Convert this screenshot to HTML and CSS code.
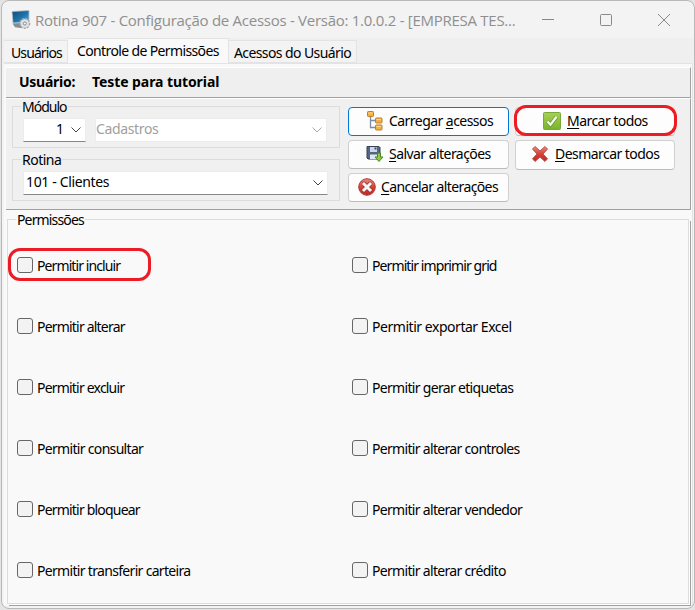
FILE: index.html
```html
<!DOCTYPE html>
<html lang="pt-BR">
<head>
<meta charset="utf-8">
<title>Rotina 907 - Configuração de Acessos</title>
<link rel="stylesheet" href="styles.css">
</head>
<body>
<div class="window">
  <header class="titlebar">
    <svg class="app-icon" width="20" height="20" viewBox="0 0 20 20">
      <defs><linearGradient id="scr" x1="0" y1="0" x2="1" y2="1"><stop offset="0" stop-color="#164873"/><stop offset=".55" stop-color="#1d74ae"/><stop offset="1" stop-color="#58b3dd"/></linearGradient></defs>
      <path d="M1 1.500 18 .5V12L2 13z" fill="url(#scr)" stroke="#b5c0c8" stroke-width=".8"/>
      <path d="M1.500 13.500 10 13v5l-6-.7z" fill="#858c92"/>
      <circle cx="13.800" cy="13.500" r="4.800" fill="#d7d9da" stroke="#a5a9ab" stroke-width="1.500" stroke-dasharray="2 1.200"/>
      <circle cx="13.800" cy="13.500" r="3.800" fill="#dfe1e2"/>
      <circle cx="13.800" cy="13.500" r="1.500" fill="#f7f7f7" stroke="#85898c"/>
    </svg>
    <h1 class="title">Rotina 907 - Configuração de Acessos - Versão: 1.0.0.2 - [EMPRESA TES...</h1>
    <div class="controls">
      <svg width="12" height="12" viewBox="0 0 12 12"><path d="M0 5.500h12"/></svg>
      <svg width="12" height="12" viewBox="0 0 12 12"><rect x=".5" y=".5" width="11" height="11" rx="1"/></svg>
      <svg width="12" height="12" viewBox="0 0 12 12"><path d="M0 0l12 12M12 0L0 12"/></svg>
    </div>
  </header>
  <nav class="tabs">
    <span class="tab tab-users">Usuários</span>
    <span class="tab tab-control active">Controle de Permissões</span>
    <span class="tab tab-access">Acessos do Usuário</span>
  </nav>
  <main class="page">
    <div class="userbar"><b class="user-label">Usuário:</b><b class="user-name">Teste para tutorial</b></div>
    <section class="toolbar">
      <div class="filters">
        <div class="group">
          <span class="legend"><span class="legend-module">Módulo</span></span>
          <div class="fields">
            <div class="combo number"><span>1</span><svg width="10" height="6" viewBox="0 0 10 6"><path d="M.5.5 5 5 9.500.5"/></svg></div>
            <div class="combo disabled"><span>Cadastros</span><svg width="10" height="6" viewBox="0 0 10 6"><path d="M.5.5 5 5 9.500.5"/></svg></div>
          </div>
        </div>
        <div class="group">
          <span class="legend"><span class="legend-routine">Rotina</span></span>
          <div class="fields">
            <div class="combo routine"><span>101 - Clientes</span><svg width="10" height="6" viewBox="0 0 10 6"><path d="M.5.5 5 5 9.500.5"/></svg></div>
          </div>
        </div>
      </div>
      <div class="actions">
        <button class="btn focused">
          <svg width="18" height="20" viewBox="0 0 18 20"><path d="M4.500 5v11.500H9M4.500 9.500H9" fill="none" stroke="#7d8ca3" stroke-width="1.300"/><g fill="#f3ae45" stroke="#bd7e2c"><rect x="1.500" y=".5" width="6" height="5" rx=".8"/><rect x="9.500" y="7" width="6.500" height="5" rx=".8"/><rect x="9.500" y="14" width="6.500" height="5" rx=".8"/></g><path d="M2.500 2h4M10.500 8.500H15M10.500 15.500H15" stroke="#ffdc8d"/></svg>
          <span class="t-load">Carregar <u>a</u>cessos</span>
        </button>
        <button class="btn save">
          <svg width="18" height="18" viewBox="0 0 18 18"><path d="M1 1.500h12l1 1V14H2l-1-1z" fill="#56657f" stroke="#34435b"/><path d="M4 2h7v5H4z" fill="#cbd8ea"/><path d="M8.500 2.500h2v2h-2z" fill="#3e4c62"/><path d="M4 9.500h7V14H4z" fill="#dbe8f6"/><path d="M11.500 8h3v4H17l-4 4.500L9 12h2.500z" fill="#8fc93c" stroke="#4b861f"/></svg>
          <span class="t-save"><u>S</u>alvar alterações</span>
        </button>
        <button class="btn cancel">
          <svg width="18" height="18" viewBox="0 0 18 18"><defs><linearGradient id="red" x2="0" y2="1"><stop stop-color="#e98a80"/><stop offset=".5" stop-color="#d34339"/><stop offset="1" stop-color="#b92825"/></linearGradient></defs><circle cx="9" cy="9" r="8.300" fill="url(#red)" stroke="#b33a35"/><path d="m6 6 6 6m0-6-6 6" stroke="#9a302e" stroke-width="4.500" stroke-linecap="round"/><path d="m6 6 6 6m0-6-6 6" stroke="#f6f6f6" stroke-width="3" stroke-linecap="square"/></svg>
          <span class="t-cancel"><u>C</u>ancelar alterações</span>
        </button>
      </div>
      <div class="actions second">
        <button class="btn mark">
          <svg width="18" height="18" viewBox="0 0 18 18"><defs><linearGradient id="green" x2="0" y2="1"><stop stop-color="#a8cf55"/><stop offset="1" stop-color="#79b52b"/></linearGradient></defs><rect x=".5" y=".5" width="17" height="17" rx="1" fill="url(#green)" stroke="#76a83a"/><path d="m4.500 9.500 3 3.300 6-8" fill="none" stroke="#639632" stroke-width="3.800"/><path d="m4.500 9.500 3 3.300 6-8" fill="none" stroke="#f5f8ee" stroke-width="2.300"/></svg>
          <span class="t-mark"><u>M</u>arcar todos</span>
          <i class="highlight hl-mark"></i>
        </button>
        <button class="btn unmark">
          <svg width="18" height="18" viewBox="0 0 18 18"><path d="M4 1.500 9 6l5-4.500 2.500 2.600L12 9l4.500 4.800L14 16.500 9 12l-5 4.500-2.500-2.700L6 9 1.500 4.100z" fill="url(#red)" stroke="#bd5049" stroke-linejoin="round"/></svg>
          <span class="t-unmark"><u>D</u>esmarcar todos</span>
        </button>
      </div>
    </section>
    <section class="permissions">
      <span class="legend"><span class="legend-perms">Permissões</span></span>
      <div class="grid">
        <label class="check tightest"><i class="box"></i><span>Permitir incluir</span><i class="highlight hl-include"></i></label>
        <label class="check tightest"><i class="box"></i><span>Permitir imprimir grid</span></label>
        <label class="check tighter"><i class="box"></i><span>Permitir alterar</span></label>
        <label class="check loose"><i class="box"></i><span>Permitir exportar Excel</span></label>
        <label class="check tighter"><i class="box"></i><span>Permitir excluir</span></label>
        <label class="check"><i class="box"></i><span>Permitir gerar etiquetas</span></label>
        <label class="check"><i class="box"></i><span>Permitir consultar</span></label>
        <label class="check"><i class="box"></i><span>Permitir alterar controles</span></label>
        <label class="check tighter"><i class="box"></i><span>Permitir bloquear</span></label>
        <label class="check"><i class="box"></i><span>Permitir alterar vendedor</span></label>
        <label class="check"><i class="box"></i><span>Permitir transferir carteira</span></label>
        <label class="check"><i class="box"></i><span>Permitir alterar crédito</span></label>
      </div>
    </section>
  </main>
</div>
</body>
</html>
```
FILE: styles.css
```css
* { box-sizing: border-box; }
body {
  margin: 0;
  width: 695px;
  height: 610px;
  padding: 0 0 1px 1px;
  overflow: hidden;
  background: #e4e4e4;
  color: #000;
  font: 14px/18px "Noto Sans", sans-serif;
  letter-spacing: -0.5px;
  white-space: nowrap;
}
svg { flex: none; display: block; }
.window {
  width: 694px;
  height: 609px;
  border: 1px solid #b9b9b9;
  border-radius: 8px;
  background: #f3f3f3;
  overflow: hidden;
  display: flex;
  flex-direction: column;
}
.titlebar { flex: none; height: 37px; display: flex; align-items: center; padding-left: 9px; }
.app-icon { margin-right: 4px; }
.title {
  margin: 0;
  width: 480px;
  font: 400 15px/22px "Open Sans", sans-serif;
  letter-spacing: -0.27px;
  color: #8f8f8f;
}
.controls { display: flex; gap: 46px; margin-left: 27px; }
.controls svg { fill: none; stroke: #898989; }
.tabs {
  flex: none;
  height: 25px;
  padding-left: 2px;
  background: #efefef;
  display: flex;
  align-items: flex-end;
}
.tab {
  height: 23px;
  border: 1px solid #e3e3e3;
  border-left: 0;
  background: #f3f3f3;
  padding: 3px 0 0 7px;
}
.tab-users { width: 64px; letter-spacing: -0.9px; }
.tab-control { width: 161px; padding-left: 9px; letter-spacing: -0.63px; }
.tab-access { width: 128px; padding-left: 5px; letter-spacing: -0.6px; }
.tab.active { height: 25px; background: #f9f9f9; border-bottom: 0; }
.page {
  flex: 1;
  min-height: 0;
  margin: 0 1px 3px 2px;
  padding: 3px 1px 0 2px;
  border-top: 1px solid #e3e3e3;
  border-right: 1px solid #e3e3e3;
  background: #f9f9f9;
  display: flex;
  flex-direction: column;
}
.userbar {
  flex: none;
  height: 31px;
  padding: 5px 0 0 13px;
  background: #efefef;
  border-top: 1px solid #fff;
  border-right: 1px solid #a0a0a0;
  border-bottom: 1px solid #a0a0a0;
  display: flex;
}
.user-label { width: 73px; letter-spacing: -0.25px; }
.user-name { letter-spacing: -0.08px; }
.toolbar {
  flex: none;
  height: 112px;
  border-top: 1px solid #fff;
  border-right: 1px solid #a0a0a0;
  border-bottom: 1px solid #a0a0a0;
  background: #f0f0f0;
  padding: 7px 0 0 6px;
  display: flex;
}
.filters { width: 328px; display: flex; flex-direction: column; gap: 11px; }
.group { height: 42px; border: 1px solid #dcdcdc; }
.legend { display: block; height: 0; }
.legend span { position: relative; top: -9px; padding: 0 1px; }
.group .legend { padding-left: 8px; }
.group .legend span { background: linear-gradient(#f0f0f0, #f0f0f0) center / 100% 6px no-repeat; }
.legend .legend-module { letter-spacing: -1px; }
.legend .legend-perms { letter-spacing: -0.85px; }
.fields { display: flex; gap: 9px; padding: 11px 0 0 10px; }
.combo {
  height: 24px;
  background: #fff;
  border: 1px solid #ececec;
  border-bottom-color: #868686;
  display: flex;
  align-items: center;
  justify-content: space-between;
  padding: 0 4px 0 2px;
}
.combo span, .btn span { margin-top: -2px; }
.combo svg { fill: none; stroke: #444; }
.number { width: 63px; padding-left: 32px; }
.disabled { width: 232px; padding-left: 0; color: #a0a0a0; border-bottom-color: #ececec; letter-spacing: -0.35px; }
.disabled svg { stroke: #aaa; }
.routine { width: 305px; letter-spacing: -0.35px; }
.actions { width: 161px; margin-left: 8px; padding-top: 1px; display: flex; flex-direction: column; gap: 4px; }
.second { width: 160px; margin-left: 6px; }
.btn {
  position: relative;
  height: 29px;
  flex: none;
  border: 1px solid #d0d0d0;
  border-bottom-color: #bcbcbc;
  border-radius: 4px;
  background: #fdfdfd;
  padding: 0 0 0 17px;
  display: flex;
  align-items: center;
  gap: 5px;
  font: inherit;
  letter-spacing: -0.55px;
  color: inherit;
}
.btn svg { position: relative; top: -1px; }
.btn u { text-underline-offset: 2px; text-decoration-thickness: 1px; }
.focused { border-color: #0078d4; }
.cancel { padding-left: 9px; letter-spacing: -0.6px; }
.mark, .unmark { gap: 6px; letter-spacing: -0.55px; }
.mark { padding-left: 27px; }
.unmark { padding-left: 15px; height: 30px; }
.highlight { position: absolute; border: 3px solid #ed1c24; border-radius: 12px; }
.hl-mark { left: -2px; top: -3px; width: 163px; height: 31px; }
.permissions {
  flex: 1;
  min-height: 0;
  border: 1px solid #dcdcdc;
  margin: 9px 2px 1px 1px;
  box-shadow: 1px 1px 0 #fff, 2px 2px 0 #a0a0a0;
}
.permissions .legend { padding-left: 8px; }
.permissions .legend span { background: linear-gradient(#f9f9f9, #f9f9f9) center / 100% 6px no-repeat; }
.grid {
  display: grid;
  grid-template-columns: 335px 1fr;
  grid-template-rows: repeat(5, 61px) 18px;
  padding: 37px 0 0 9px;
}
.check { position: relative; display: flex; align-items: flex-start; gap: 4px; letter-spacing: -0.68px; }
.tightest { letter-spacing: -0.9px; }
.tighter { letter-spacing: -0.8px; }
.loose { letter-spacing: -0.46px; }
.box { width: 16px; height: 16px; border: 1px solid #666; border-radius: 3px; background: #f3f3f3; }
.hl-include { left: -9px; top: -9px; width: 143px; height: 33px; }
```
